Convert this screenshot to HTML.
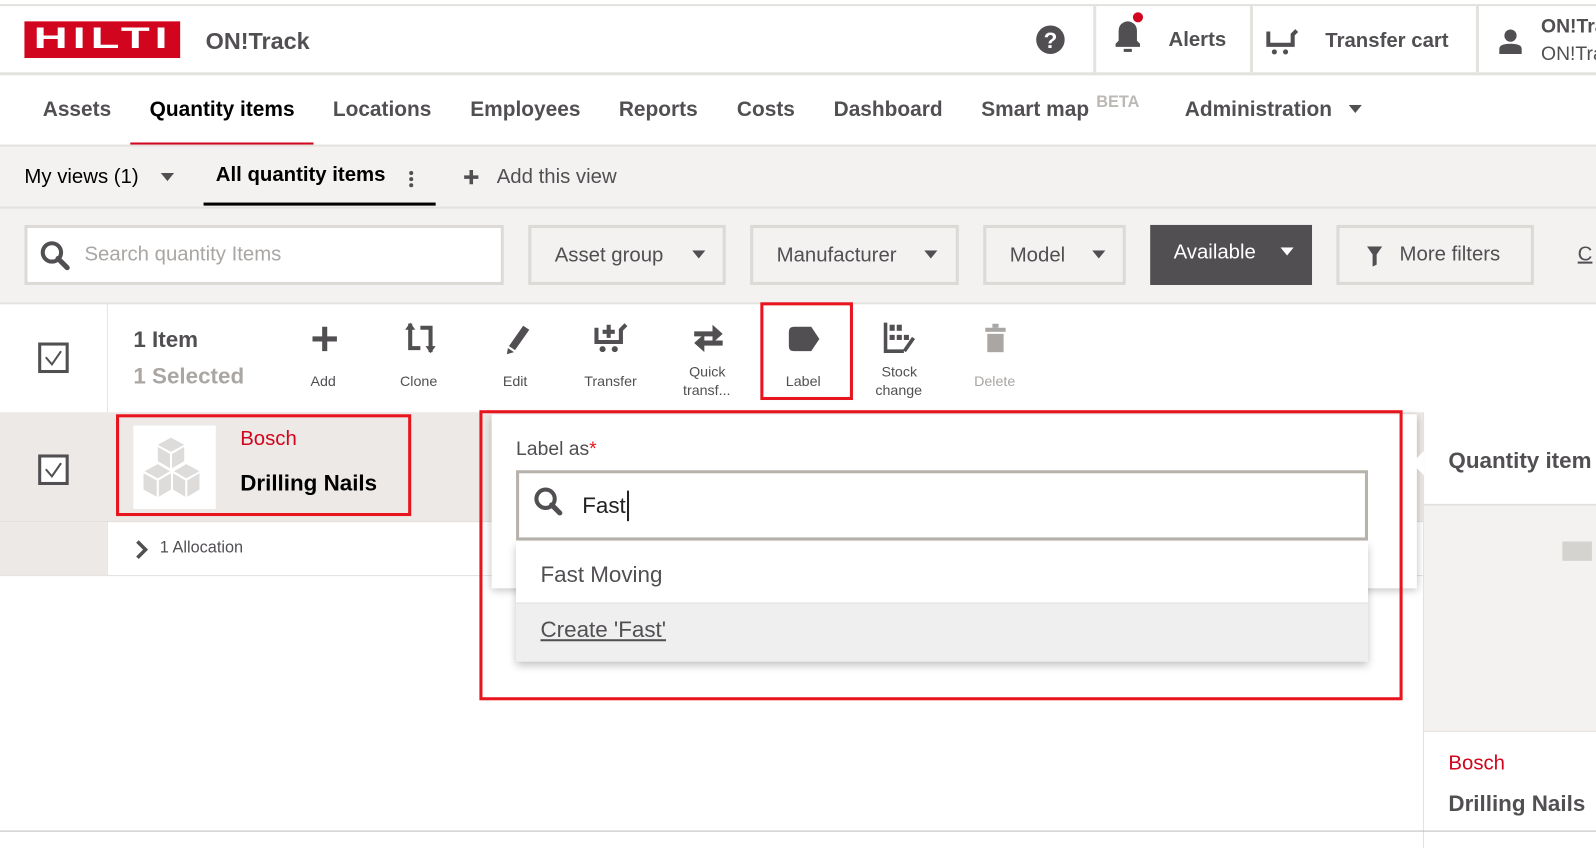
<!DOCTYPE html>
<html><head><meta charset="utf-8"><style>
*{margin:0;padding:0;box-sizing:border-box}
body{width:1596px;height:833px;overflow:hidden;background:#fff;font-family:"Liberation Sans",Arial,sans-serif;color:#524f53;position:relative}
#w{position:absolute;left:0;top:0;width:1568px;height:819px;transform:scale(1.01786);transform-origin:0 0}
.a{position:absolute;white-space:nowrap}
.b{font-weight:bold}
svg{position:absolute}
</style></head><body><div id="w">
<!-- header -->
<div class="a" style="left:0;top:4px;width:1568px;height:2px;background:#e4e2df"></div>
<div class="a" style="left:0;top:71px;width:1568px;height:3px;background:#e4e2df"></div>
<div class="a" style="left:24px;top:21px;width:153px;height:36px;background:#d2051e"></div>
<div class="a b" style="left:33px;top:22px;font-size:29px;color:#fff;letter-spacing:3px;transform:scaleX(1.6);transform-origin:left">HILTI</div>
<div class="a b" style="left:202px;top:27px;font-size:23px">ON!Track</div>
<svg style="left:1017px;top:24px" width="30" height="30"><circle cx="15" cy="15" r="14" fill="#524f53"/><text x="15" y="23" font-size="22" font-weight="bold" fill="#fff" text-anchor="middle" font-family="Liberation Sans">?</text></svg>
<div class="a" style="left:1074px;top:6px;width:3px;height:65px;background:#e4e2df"></div>
<svg style="left:1090px;top:10px" width="40" height="48"><path d="M6 36 h24 v-3 l-3-3 v-10 a9 9 0 0 0 -18 0 v10 l-3 3z" fill="#524f53"/><rect x="14" y="38" width="8" height="3" fill="#524f53"/><circle cx="28" cy="7" r="5" fill="#d2051e"/></svg>
<div class="a b" style="left:1148px;top:28px;font-size:20px">Alerts</div>
<div class="a" style="left:1228px;top:6px;width:3px;height:65px;background:#e4e2df"></div>
<svg style="left:1244px;top:27px" width="36" height="28"><path d="M2 4 v13 h24 v-10 l4 -4" stroke="#524f53" stroke-width="4" fill="none"/><circle cx="8" cy="24" r="2.5" fill="#524f53"/><circle cx="19" cy="24" r="2.5" fill="#524f53"/></svg>
<div class="a b" style="left:1302px;top:29px;font-size:20px">Transfer cart</div>
<div class="a" style="left:1450px;top:6px;width:3px;height:65px;background:#e4e2df"></div>
<svg style="left:1470px;top:27px" width="28" height="28"><circle cx="14" cy="8" r="6" fill="#524f53"/><path d="M3 26 v-5 q0-5 11-5 q11 0 11 5 v5z" fill="#524f53"/></svg>
<div class="a b" style="left:1514px;top:16px;font-size:19px">ON!Track</div>
<div class="a" style="left:1514px;top:43px;font-size:19px">ON!Track</div>
<!-- nav -->
<div class="a b" style="left:42px;top:96px;font-size:20.5px">Assets</div>
<div class="a b" style="left:147px;top:96px;font-size:20.5px;color:#000">Quantity items</div>
<div class="a" style="left:128px;top:140px;width:180px;height:3px;background:#d2051e"></div>
<div class="a b" style="left:327px;top:96px;font-size:20.5px">Locations</div>
<div class="a b" style="left:462px;top:96px;font-size:20.5px">Employees</div>
<div class="a b" style="left:608px;top:96px;font-size:20.5px">Reports</div>
<div class="a b" style="left:724px;top:96px;font-size:20.5px">Costs</div>
<div class="a b" style="left:819px;top:96px;font-size:20.5px">Dashboard</div>
<div class="a b" style="left:964px;top:96px;font-size:20.5px">Smart map</div>
<div class="a b" style="left:1077px;top:92px;font-size:16px;color:#bbb8b5">BETA</div>
<div class="a b" style="left:1164px;top:96px;font-size:20.5px">Administration</div>
<svg style="left:1325px;top:103px" width="14" height="9"><path d="M0 0h13l-6.5 8z" fill="#524f53"/></svg>
<!-- views bar -->
<div class="a" style="left:0;top:143px;width:1568px;height:155px;background:#f3f2f0"></div>
<div class="a" style="left:0;top:142px;width:1568px;height:2px;background:#e4e2df"></div>
<div class="a" style="left:24px;top:163px;font-size:20px;color:#000">My views (1)</div>
<svg style="left:158px;top:170px" width="14" height="9"><path d="M0 0h13l-6.5 8z" fill="#524f53"/></svg>
<div class="a b" style="left:212px;top:161px;font-size:20px;color:#000">All quantity items</div>
<svg style="left:401px;top:167px" width="6" height="18"><circle cx="3" cy="3" r="2" fill="#524f53"/><circle cx="3" cy="9" r="2" fill="#524f53"/><circle cx="3" cy="15" r="2" fill="#524f53"/></svg>
<div class="a" style="left:200px;top:199px;width:228px;height:3px;background:#000"></div>
<div class="a" style="left:0;top:203px;width:1568px;height:2px;background:#e4e2df"></div>
<svg style="left:455px;top:166px" width="16" height="16"><path d="M8 1v14M1 8h14" stroke="#524f53" stroke-width="3.5"/></svg>
<div class="a" style="left:488px;top:163px;font-size:20px">Add this view</div>
<!-- filters -->
<div class="a" style="left:24px;top:221px;width:471px;height:59px;border:3px solid #dcdad6;background:#fff"></div>
<svg style="left:39px;top:236px" width="32" height="32"><circle cx="12" cy="12" r="9" stroke="#524f53" stroke-width="4" fill="none"/><path d="M18 18l9 9" stroke="#524f53" stroke-width="5" stroke-linecap="round"/></svg>
<div class="a" style="left:83px;top:239px;font-size:20px;color:#a9a6a3">Search quantity Items</div>
<div class="a" style="left:519px;top:221px;width:194px;height:59px;border:3px solid #dcdad6"></div>
<div class="a" style="left:545px;top:240px;font-size:20px">Asset group</div>
<svg style="left:680px;top:246px" width="14" height="9"><path d="M0 0h13l-6.5 8z" fill="#524f53"/></svg>
<div class="a" style="left:737px;top:221px;width:205px;height:59px;border:3px solid #dcdad6"></div>
<div class="a" style="left:763px;top:240px;font-size:20px">Manufacturer</div>
<svg style="left:908px;top:246px" width="14" height="9"><path d="M0 0h13l-6.5 8z" fill="#524f53"/></svg>
<div class="a" style="left:966px;top:221px;width:140px;height:59px;border:3px solid #dcdad6"></div>
<div class="a" style="left:992px;top:240px;font-size:20px">Model</div>
<svg style="left:1073px;top:246px" width="14" height="9"><path d="M0 0h13l-6.5 8z" fill="#524f53"/></svg>
<div class="a" style="left:1130px;top:221px;width:159px;height:59px;background:#524f53"></div>
<div class="a" style="left:1153px;top:237px;font-size:20px;color:#fff">Available</div>
<svg style="left:1258px;top:243px" width="14" height="9"><path d="M0 0h13l-6.5 8z" fill="#fff"/></svg>
<div class="a" style="left:1313px;top:221px;width:194px;height:59px;border:3px solid #dcdad6"></div>
<svg style="left:1343px;top:242px" width="16" height="20"><path d="M0 0h15l-5.5 8v10l-4 2v-12z" fill="#524f53"/></svg>
<div class="a" style="left:1375px;top:239px;font-size:20px">More filters</div>
<div class="a" style="left:1550px;top:239px;font-size:20px;text-decoration:underline">C</div>
<!-- toolbar -->
<div class="a" style="left:0;top:297px;width:1568px;height:2px;background:#e4e2df"></div>
<div class="a" style="left:105px;top:299px;width:1px;height:267px;background:#e4e2df"></div>
<svg style="left:37px;top:336px" width="32" height="32"><rect x="2" y="2" width="27" height="27" stroke="#524f53" stroke-width="3" fill="#fff"/><path d="M8 15l6 7 9-13" stroke="#524f53" stroke-width="2" fill="none"/></svg>
<div class="a b" style="left:131px;top:321px;font-size:22px">1 Item</div>
<div class="a b" style="left:131px;top:357px;font-size:22px;color:#a9a6a3">1 Selected</div>
<svg style="left:306px;top:320px" width="26" height="26"><path d="M13 1v24M1 13h24" stroke="#524f53" stroke-width="5"/></svg>
<div class="a" style="left:305px;top:366px;font-size:14px">Add</div>
<svg style="left:397px;top:316px" width="32" height="32"><path d="M6 2v24h10M26 30V6H16" stroke="#524f53" stroke-width="4" fill="none"/><path d="M1 8l5-7 5 7zM21 24l5 7 5-7z" fill="#524f53"/></svg>
<div class="a" style="left:393px;top:366px;font-size:14px">Clone</div>
<svg style="left:494px;top:318px" width="28" height="30"><path d="M20 2l6 4-14 20-6-4z M5 24l6 4-7 2z" fill="#524f53"/></svg>
<div class="a" style="left:494px;top:366px;font-size:14px">Edit</div>
<svg style="left:583px;top:316px" width="38" height="32"><path d="M3 6v14h24v-12l5-5" stroke="#524f53" stroke-width="4" fill="none"/><path d="M15 3v13M9 10h12" stroke="#524f53" stroke-width="4"/><circle cx="9" cy="27" r="3" fill="#524f53"/><circle cx="21" cy="27" r="3" fill="#524f53"/></svg>
<div class="a" style="left:574px;top:366px;font-size:14px">Transfer</div>
<svg style="left:678px;top:316px" width="36" height="32"><path d="M4 12h20" stroke="#524f53" stroke-width="5"/><path d="M22 3l10 9-10 9z" fill="#524f53"/><path d="M12 21h20" stroke="#524f53" stroke-width="5"/><path d="M14 12l-10 9 10 9z" fill="#524f53"/></svg>
<div class="a" style="left:677px;top:357px;font-size:14px">Quick</div>
<div class="a" style="left:671px;top:375px;font-size:14px">transf...</div>
<div class="a" style="left:747px;top:297px;width:91px;height:96px;border:3px solid #e8141e"></div>
<svg style="left:773px;top:320px" width="34" height="26"><path d="M7 1h17l8 12-8 12h-17q-5 0-5-5v-14q0-5 5-5z" fill="#524f53"/></svg>
<div class="a" style="left:772px;top:366px;font-size:14px">Label</div>
<svg style="left:866px;top:315px" width="36" height="34"><path d="M4 2v28h18" stroke="#524f53" stroke-width="3.5" fill="none"/><rect x="8" y="4" width="5" height="6" fill="#524f53"/><rect x="15" y="4" width="5" height="6" fill="#524f53"/><rect x="8" y="14" width="5" height="5" fill="#524f53"/><rect x="15" y="14" width="5" height="5" fill="#524f53"/><rect x="22" y="14" width="5" height="5" fill="#524f53"/><path d="M30 16l3 2-9 13-3-2z" fill="#524f53"/></svg>
<div class="a" style="left:866px;top:357px;font-size:14px">Stock</div>
<div class="a" style="left:860px;top:375px;font-size:14px">change</div>
<svg style="left:966px;top:318px" width="24" height="30"><rect x="9" y="0" width="6" height="4" fill="#a9a6a3"/><rect x="2" y="4" width="20" height="4" fill="#a9a6a3"/><rect x="4" y="10" width="16" height="18" fill="#a9a6a3"/></svg>
<div class="a" style="left:957px;top:366px;font-size:14px;color:#a9a6a3">Delete</div>
<!-- row -->
<div class="a" style="left:0;top:405px;width:1398px;height:107px;background:#ece9e6"></div>
<div class="a" style="left:0;top:512px;width:1398px;height:1px;background:#e0ddd9"></div>
<div class="a" style="left:0;top:513px;width:105px;height:52px;background:#ece9e6"></div>
<div class="a" style="left:0;top:565px;width:1398px;height:1px;background:#e4e2df"></div>
<svg style="left:37px;top:446px" width="32" height="32"><rect x="2" y="2" width="27" height="27" stroke="#524f53" stroke-width="3" fill="#fff"/><path d="M8 15l6 7 9-13" stroke="#524f53" stroke-width="2" fill="none"/></svg>
<div class="a" style="left:114px;top:407px;width:290px;height:100px;border:3px solid #e8141e"></div>
<div class="a" style="left:131px;top:418px;width:81px;height:82px;background:#fff"></div>
<svg style="left:138px;top:428px" width="66" height="64"><g fill="#dedcda"><path d="M30 2l13 7-13 7-13-7z"/><path d="M17 11l12 7v14l-12-7z"/><path d="M31 18l12-7v14l-12 7z"/><path d="M17 28l12 7-12 7-13-7z"/><path d="M3 37l13 7v16l-13-7z"/><path d="M18 44l12-7v16l-12 7z"/><path d="M45 28l13 7-13 7-12-7z"/><path d="M32 37l12 7v16l-12-7z"/><path d="M46 44l12-7v16l-12 7z"/></g></svg>
<div class="a" style="left:236px;top:420px;font-size:20px;color:#d2051e">Bosch</div>
<div class="a b" style="left:236px;top:462px;font-size:22px;color:#000">Drilling Nails</div>
<svg style="left:133px;top:530px" width="14" height="20"><path d="M2 2l8 8-8 8" stroke="#524f53" stroke-width="3.5" fill="none"/></svg>
<div class="a" style="left:157px;top:530px;font-size:16px">1 Allocation</div>
<!-- popup -->
<div class="a" style="left:483px;top:407px;width:909px;height:171px;background:#fff;box-shadow:0 2px 8px rgba(0,0,0,.25)"></div>
<div class="a" style="left:471px;top:403px;width:907px;height:285px;border:3px solid #e8141e"></div>
<div class="a" style="left:507px;top:431px;font-size:19px">Label as<span style="color:#e8141e">*</span></div>
<div class="a" style="left:507px;top:462px;width:837px;height:69px;border:3px solid #b7b3ac;background:#fff"></div>
<svg style="left:523px;top:478px" width="32" height="32"><circle cx="13" cy="12" r="9" stroke="#524f53" stroke-width="4" fill="none"/><path d="M19 18l8 8" stroke="#524f53" stroke-width="5" stroke-linecap="round"/></svg>
<div class="a" style="left:572px;top:484px;font-size:22px;color:#222">Fast</div>
<div class="a" style="left:616px;top:482px;width:2px;height:30px;background:#222"></div>
<div class="a" style="left:507px;top:532px;width:837px;height:118px;background:#fff;box-shadow:0 4px 8px rgba(0,0,0,.25)"></div>
<div class="a" style="left:507px;top:592px;width:837px;height:1px;background:#e0ddd9"></div>
<div class="a" style="left:507px;top:593px;width:837px;height:57px;background:#efefef"></div>
<div class="a" style="left:531px;top:552px;font-size:22px">Fast Moving</div>
<div class="a" style="left:531px;top:606px;font-size:22px;text-decoration:underline">Create 'Fast'</div>
<!-- right panel -->
<div class="a" style="left:1398px;top:405px;width:1px;height:428px;background:#e4e2df"></div>
<svg style="left:1387px;top:443px" width="12" height="24"><path d="M12 0L0 12l12 12z" fill="#fff"/></svg>
<div class="a b" style="left:1423px;top:440px;font-size:22px">Quantity item</div>
<div class="a" style="left:1399px;top:495px;width:197px;height:2px;background:#e4e2df"></div>
<div class="a" style="left:1399px;top:497px;width:197px;height:221px;background:#f3f2f0"></div>
<div class="a" style="left:1535px;top:532px;width:29px;height:19px;background:#d5d3d0"></div>
<div class="a" style="left:1399px;top:718px;width:197px;height:1px;background:#e4e2df"></div>
<div class="a" style="left:1423px;top:739px;font-size:20px;color:#d2051e">Bosch</div>
<div class="a b" style="left:1423px;top:777px;font-size:22px">Drilling Nails</div>
<div class="a" style="left:0;top:816px;width:1568px;height:1px;background:#bbb"></div>
</div></body></html>
